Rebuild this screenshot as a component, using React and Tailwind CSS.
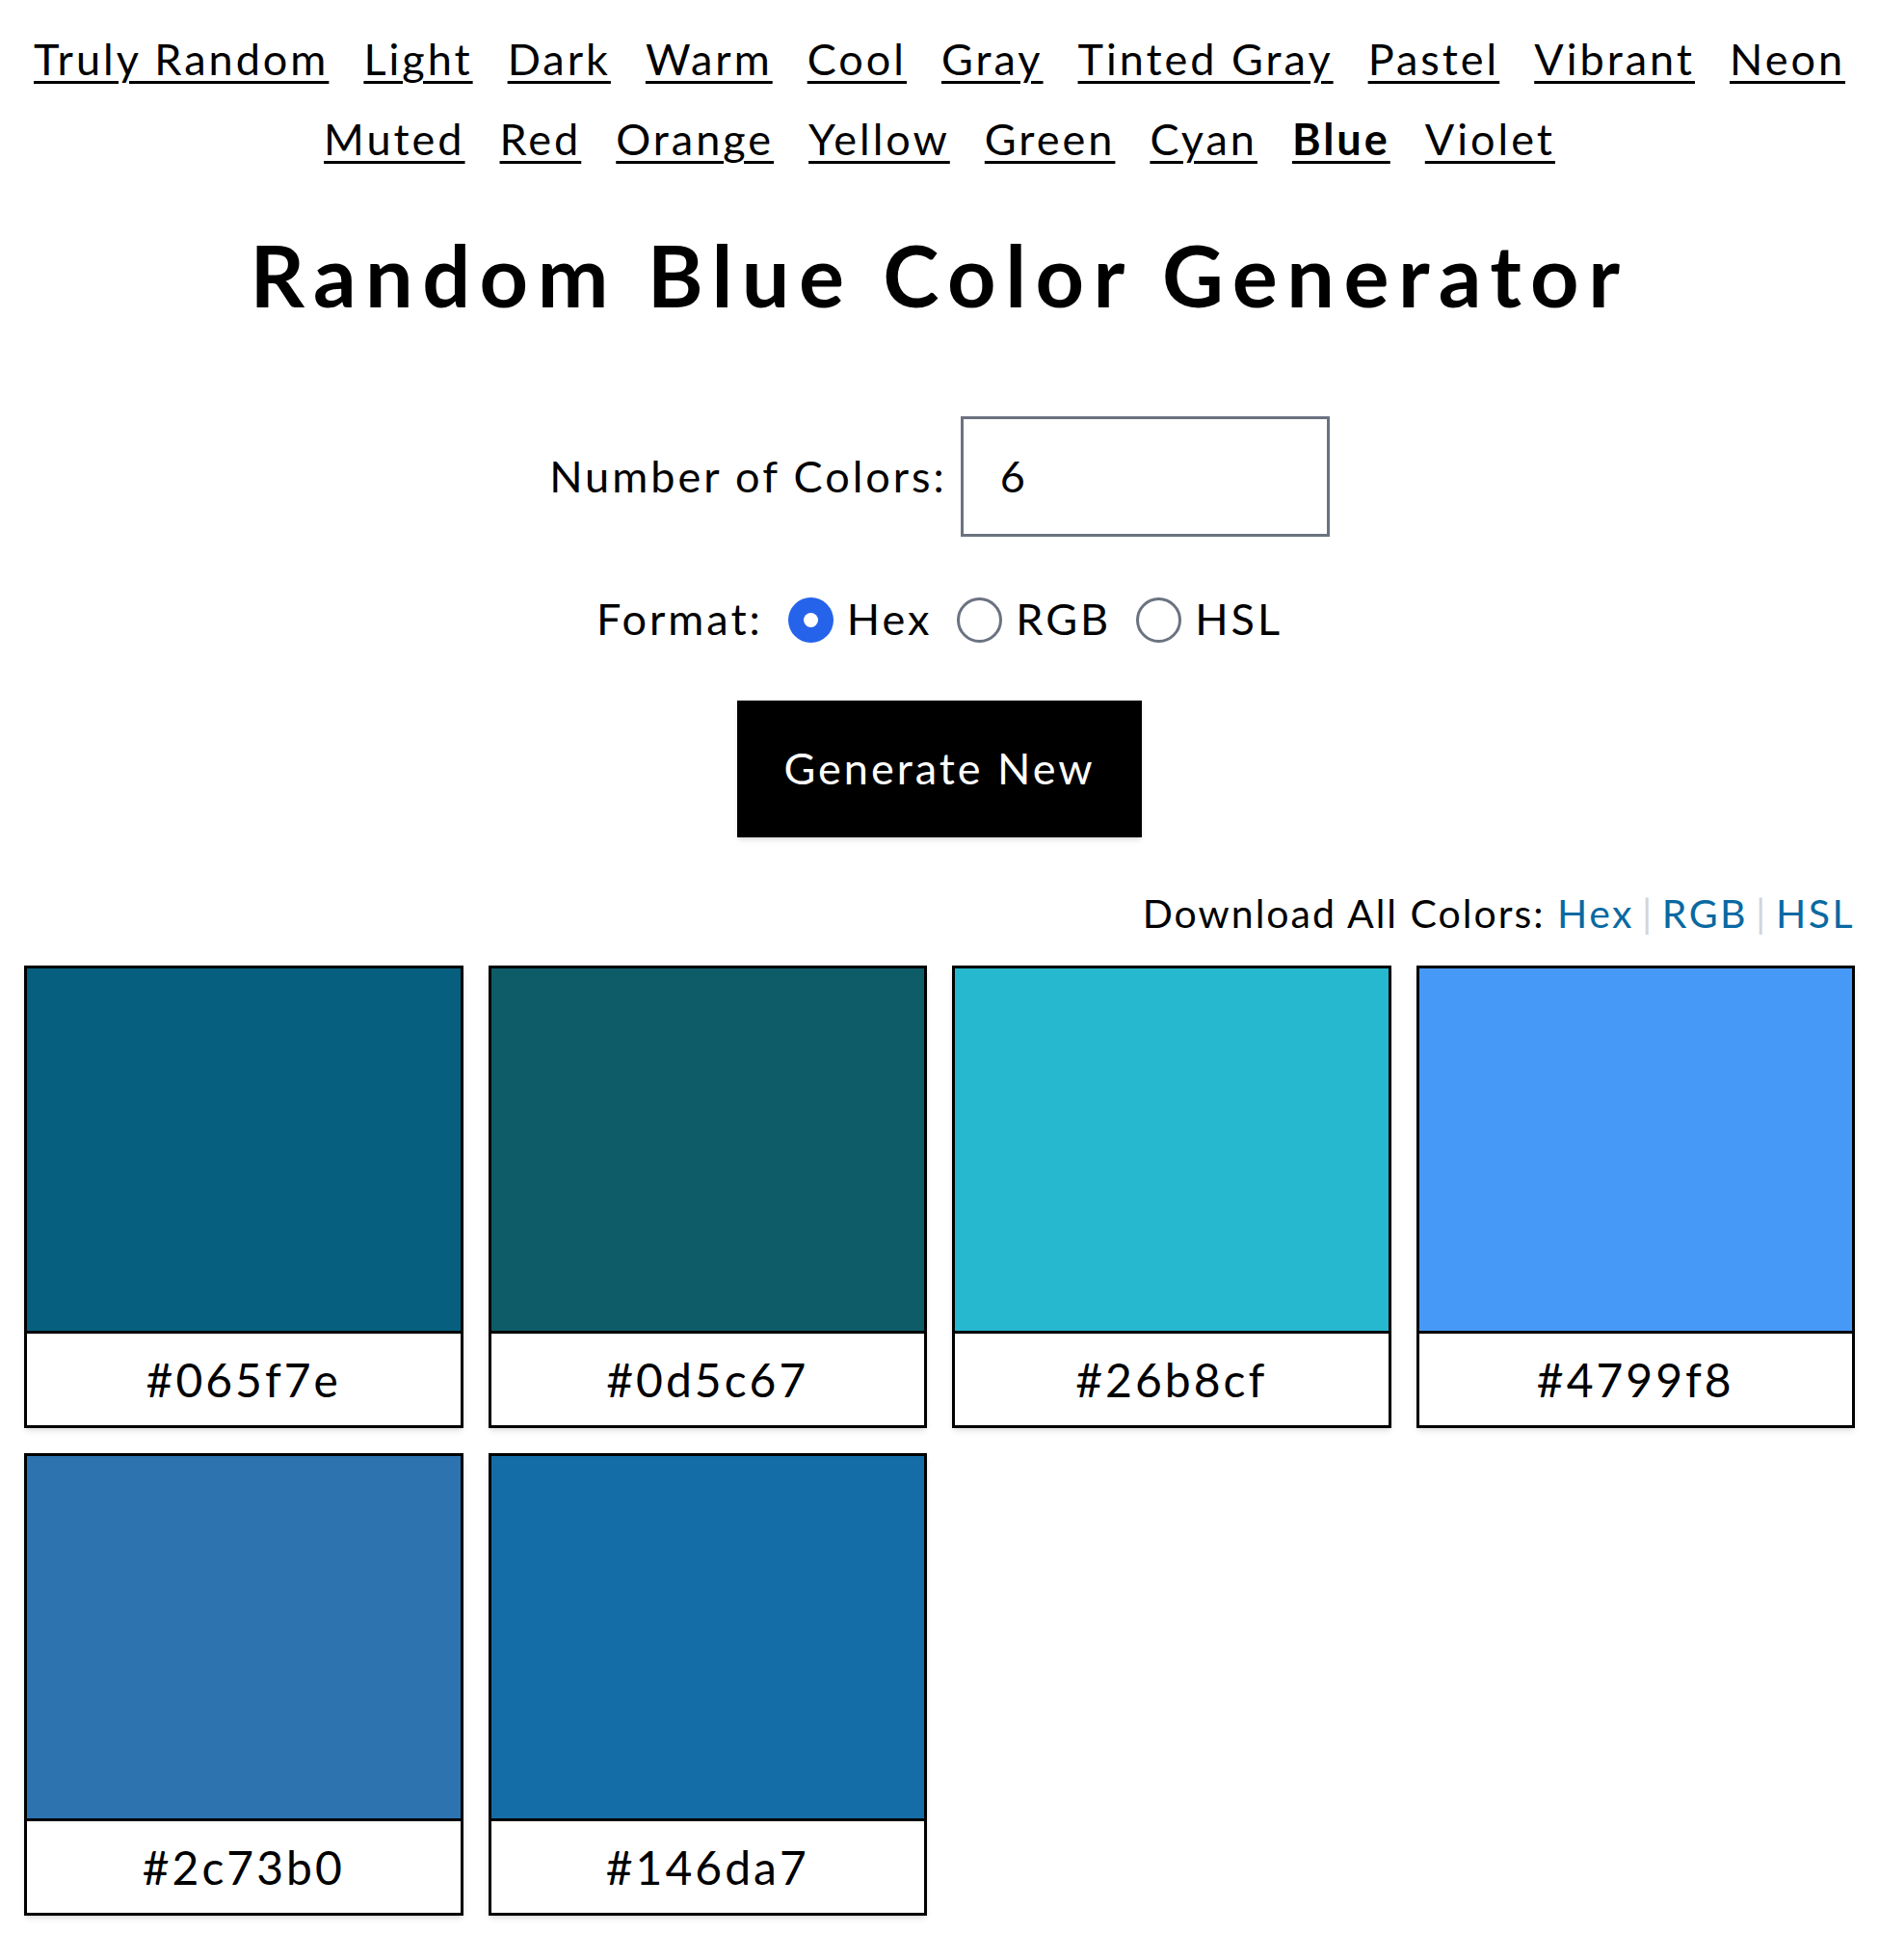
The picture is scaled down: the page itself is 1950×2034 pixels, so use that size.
import React from "react";

const row1 = ["Truly Random", "Light", "Dark", "Warm", "Cool", "Gray", "Tinted Gray", "Pastel", "Vibrant", "Neon"];
const row2 = ["Muted", "Red", "Orange", "Yellow", "Green", "Cyan", "Blue", "Violet"];
const colors = ["#065f7e", "#0d5c67", "#26b8cf", "#4799f8", "#2c73b0", "#146da7"];

function NavRow({ items }) {
  return (
    <div className="flex justify-center gap-x-[36px] leading-[83px]">
      {items.map((t) => (
        <a
          key={t}
          href="#"
          className={`underline decoration-[3px] underline-offset-[6px] ${t === "Blue" ? "font-bold" : ""}`}
        >
          {t}
        </a>
      ))}
    </div>
  );
}

function Radio({ checked, label }) {
  return (
    <label className="flex items-center gap-[14px]">
      {checked ? (
        <span className="flex h-[47px] w-[47px] items-center justify-center rounded-full bg-[#2563eb]">
          <span className="h-[15px] w-[15px] rounded-full bg-white" />
        </span>
      ) : (
        <span className="h-[47px] w-[47px] rounded-full border-[3px] border-[#6b7280] bg-white" />
      )}
      <span>{label}</span>
    </label>
  );
}

export default function App() {
  return (
    <div className="min-h-[2034px] w-[1950px] bg-white px-[25px] pb-[49px] pt-[20px] font-['Lato',sans-serif] text-[45px] tracking-[3px] text-black">
      <nav>
        <NavRow items={row1} />
        <NavRow items={row2} />
      </nav>

      <h1 className="mt-[46px] text-center text-[88px] font-bold leading-[106px] tracking-[9.5px]">
        Random Blue Color Generator
      </h1>

      <div className="mt-[94px] flex items-center justify-center gap-[14px]">
        <span>Number of Colors:</span>
        <div className="flex h-[125px] w-[383px] items-center border-[3px] border-[#6b7280] pl-[38px]">
          6
        </div>
      </div>

      <div className="mt-[56px] flex h-[60px] items-center justify-center gap-[26px]">
        <span>Format:</span>
        <Radio checked label="Hex" />
        <Radio label="RGB" />
        <Radio label="HSL" />
      </div>

      <div className="mt-[54px] flex justify-center">
        <button className="h-[142px] w-[420px] bg-black tracking-[3px] text-white shadow-md">Generate New</button>
      </div>

      <div className="mt-[49px] flex justify-end text-[41px] leading-[60px] tracking-[2.5px]">
        <span className="tracking-[2px]">Download All Colors:&nbsp;</span>
        <a href="#" className="text-[#0969a2]">Hex</a>
        <span className="px-[8px] text-[#d1d5db]">|</span>
        <a href="#" className="text-[#0969a2]">RGB</a>
        <span className="px-[8px] text-[#d1d5db]">|</span>
        <a href="#" className="text-[#0969a2]">HSL</a>
      </div>

      <div className="mt-[24px] grid grid-cols-4 gap-[26px]">
        {colors.map((c) => (
          <div key={c} className="border-[3px] border-black bg-white shadow-md">
            <div className="h-[379px] border-b-[3px] border-black" style={{ backgroundColor: c }} />
            <div className="flex h-[95px] items-center justify-center text-[48px]">{c}</div>
          </div>
        ))}
      </div>
    </div>
  );
}
